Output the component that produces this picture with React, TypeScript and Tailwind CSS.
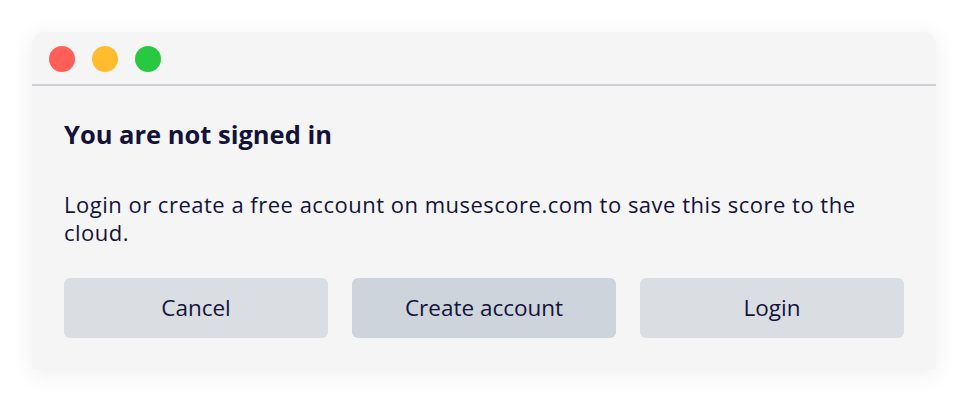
import React from "react";

const buttons = [
    { label: "Cancel", bg: "bg-[#dadee3]" },
    { label: "Create account", bg: "bg-[#ced4dc]" },
    { label: "Login", bg: "bg-[#dadee3]" },
];

const App: React.FC = () => {
    return (
        <div className="w-[960px] h-[394px] bg-white pt-8 pl-8 font-['Open_Sans',sans-serif] text-[#13133a]">
            <div className="w-[904px] h-[338px] bg-[#f5f5f5] rounded-t-xl shadow-[0_4px_24px_rgba(0,0,0,0.07)] flex flex-col">
                {/* Title bar */}
                <div className="h-[54px] flex items-center gap-[17px] pl-[17px] pt-[1px] border-b-2 border-[#ccd0d5]">
                    <span className="w-[26px] h-[26px] rounded-full bg-[#ff5f57]" />
                    <span className="w-[26px] h-[26px] rounded-full bg-[#febc2e]" />
                    <span className="w-[26px] h-[26px] rounded-full bg-[#28c840]" />
                </div>
                {/* Body */}
                <div className="flex flex-col px-8 pt-[32px]">
                    <h1 className="text-[25.5px] font-bold leading-[32px]">You are not signed in</h1>
                    <p className="mt-[40px] text-[22px] leading-[28px] tracking-[0.5px] w-[830px]">
                        Login or create a free account on musescore.com to save this score to the cloud.
                    </p>
                    <div className="flex gap-6 mt-[32px]">
                        {buttons.map(b => (
                            <button
                                key={b.label}
                                type="button"
                                className={`${b.bg} w-[264px] h-[60px] rounded-md text-[22.5px] flex items-center justify-center`}
                            >
                                {b.label}
                            </button>
                        ))}
                    </div>
                </div>
            </div>
        </div>
    );
};

export default App;
